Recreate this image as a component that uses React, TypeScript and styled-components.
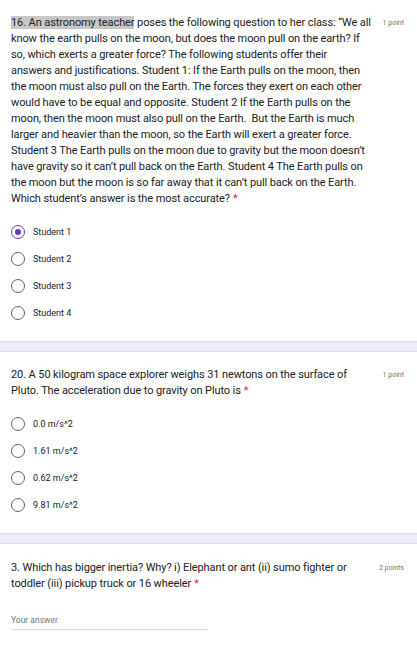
import styled, { createGlobalStyle } from 'styled-components'

const GlobalStyle = createGlobalStyle`
  html, body {
    margin: 0;
    padding: 0;
    background: #f0ebf8;
  }
  * {
    box-sizing: border-box;
  }
`

const Page = styled.div`
  width: 417px;
  background: #f0ebf8;
`

const Card = styled.div<{ $first?: boolean; $pad?: string }>`
  background: #ffffff;
  border-top: ${(p) => (p.$first ? 'none' : '1px solid #dadce0')};
  border-bottom: 1px solid #dadce0;
  padding: ${(p) => p.$pad || '15px 13px 15px 11px'};
  margin-bottom: 9px;
`

const Header = styled.div`
  display: flex;
  align-items: flex-start;
`

const Title = styled.div`
  flex: 1;
  min-width: 0;
  font-family: Roboto, 'Liberation Sans', sans-serif;
  font-size: 11px;
  line-height: 16px;
  color: #202124;
  letter-spacing: -0.1px;
`

// the long question keeps the reference's line breaks
const Line = styled.span`
  display: block;
  white-space: pre;
`

const Highlight = styled.span`
  background: #c8c8c8;
`

const Required = styled.span`
  color: #d93025;
  margin-left: 3px;
`

const Points = styled.div`
  flex: none;
  margin-left: 6px;
  padding-top: 3px;
  font-family: Roboto, 'Liberation Sans', sans-serif;
  font-size: 7px;
  line-height: 10px;
  color: #70757a;
`

const Options = styled.div`
  display: flex;
  flex-direction: column;
  margin-top: 11px;
`

const Option = styled.label`
  display: flex;
  align-items: center;
  gap: 8px;
  height: 27px;
  font-family: Roboto, 'Liberation Sans', sans-serif;
  font-size: 9px;
  color: #202124;
`

const Radio = styled.span<{ $checked?: boolean }>`
  width: 14px;
  height: 14px;
  border-radius: 50%;
  border: 1.5px solid ${(p) => (p.$checked ? '#673ab7' : '#5f6368')};
  display: flex;
  align-items: center;
  justify-content: center;

  &::after {
    content: '';
    width: 6px;
    height: 6px;
    border-radius: 50%;
    background: ${(p) => (p.$checked ? '#673ab7' : 'transparent')};
  }
`

const AnswerInput = styled.div`
  margin-top: 21px;
  width: 197px;
  border-bottom: 1px solid #dadce0;
  font-family: Roboto, 'Liberation Sans', sans-serif;
  font-size: 8.5px;
  line-height: 14px;
  color: #70757a;
  padding-bottom: 2px;
`

const astronomyLines = [
  'know the earth pulls on the moon, but does the moon pull on the earth? If',
  'so, which exerts a greater force? The following students offer their',
  'answers and justifications. Student 1: If the Earth pulls on the moon, then',
  'the moon must also pull on the Earth. The forces they exert on each other',
  'would have to be equal and opposite. Student 2 If the Earth pulls on the',
  'moon, then the moon must also pull on the Earth.  But the Earth is much',
  'larger and heavier than the moon, so the Earth will exert a greater force.',
  'Student 3 The Earth pulls on the moon due to gravity but the moon doesn’t',
  'have gravity so it can’t pull back on the Earth. Student 4 The Earth pulls on',
  'the moon but the moon is so far away that it can’t pull back on the Earth.',
]

interface ChoiceProps {
  items: string[]
  selected?: number
}

function Choices({ items, selected }: ChoiceProps) {
  return (
    <Options>
      {items.map((item, i) => (
        <Option key={item}>
          <Radio $checked={i === selected} />
          {item}
        </Option>
      ))}
    </Options>
  )
}

export default function App() {
  return (
    <Page>
      <GlobalStyle />
      <Card $first>
        <Header>
          <Title>
            <Line>
              <Highlight>16. An astronomy teacher</Highlight>
              {' poses the following question to her class: “We all'}
            </Line>
            {astronomyLines.map((line) => (
              <Line key={line}>{line}</Line>
            ))}
            <Line>
              Which student’s answer is the most accurate?
              <Required>*</Required>
            </Line>
          </Title>
          <Points>1 point</Points>
        </Header>
        <Choices
          items={['Student 1', 'Student 2', 'Student 3', 'Student 4']}
          selected={0}
        />
      </Card>
      <Card>
        <Header>
          <Title>
            20. A 50 kilogram space explorer weighs 31 newtons on the surface of
            Pluto. The acceleration due to gravity on Pluto is
            <Required>*</Required>
          </Title>
          <Points>1 point</Points>
        </Header>
        <Choices items={['0.0 m/s^2', '1.61 m/s^2', '0.62 m/s^2', '9.81 m/s^2']} />
      </Card>
      <Card $pad='16px 13px 22px 11px'>
        <Header>
          <Title>
            3. Which has bigger inertia? Why? i) Elephant or ant (ii) sumo
            fighter or toddler (iii) pickup truck or 16 wheeler
            <Required>*</Required>
          </Title>
          <Points>2 points</Points>
        </Header>
        <AnswerInput>Your answer</AnswerInput>
      </Card>
    </Page>
  )
}
